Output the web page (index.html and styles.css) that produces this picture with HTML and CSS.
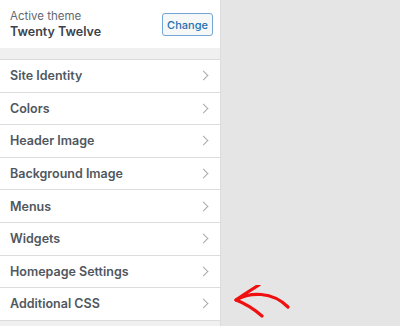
FILE: index.html
```html
<!DOCTYPE html>
<html lang="en">
<head>
    <meta charset="UTF-8">
    <title>Customize</title>
    <link rel="stylesheet" href="styles.css">
</head>
<body>

<div class="panel">
    <!-- Active theme -->
    <div class="theme">
        <div class="theme-info">
            <span class="theme-label">Active theme</span>
            <span class="theme-name">Twenty Twelve</span>
        </div>
        <button class="change-button">Change</button>
    </div>

    <div class="spacer"></div>

    <ul class="sections">
        <li>Site Identity<span class="chevron"></span></li>
        <li>Colors<span class="chevron"></span></li>
        <li>Header Image<span class="chevron"></span></li>
        <li>Background Image<span class="chevron"></span></li>
        <li>Menus<span class="chevron"></span></li>
        <li>Widgets<span class="chevron"></span></li>
        <li>Homepage Settings<span class="chevron"></span></li>
        <li class="marked">Additional CSS<span class="chevron"></span>
            <!-- Hand drawn arrow -->
            <svg class="arrow" width="64" height="40" viewBox="0 0 64 40">
                <path d="M4 15 C 18 7, 40 6, 56 22" />
                <path d="M27 0 C 19 5, 11 10, 4 15 C 12 18, 22 24, 30 31" />
            </svg>
        </li>
    </ul>
</div>

</body>
</html>
```

FILE: styles.css
```css
body {
    margin: 0;
    background-color: #e5e5e5;
    font-family: "Inter", "Liberation Sans", sans-serif;
    color: #50575e;
}

.panel {
    width: 220px;
    height: 326px;
    background-color: #f0f0f1;
    border-right: 1px solid #dcdcde;
}

/* Active theme block */
.theme {
    display: flex;
    align-items: center;
    justify-content: space-between;
    height: 48px;
    padding: 0 7px 0 10px;
    background-color: #fff;
    box-sizing: border-box;
}
.theme-info {
    display: flex;
    flex-direction: column;
    gap: 1px;
    margin-top: -1px;
}
.theme-label {
    font-size: 11.5px;
    color: #646970;
}
.theme-name {
    font-size: 12.5px;
    font-weight: 600;
    color: #3c434a;
}
.change-button {
    width: 51px;
    height: 23px;
    margin-top: 1px;
    padding: 0;
    border: 1px solid #72a6d9;
    border-radius: 3px;
    background-color: #f6f7f7;
    color: #2271b1;
    font-family: inherit;
    font-size: 11px;
    font-weight: 500;
}

.spacer {
    height: 11px;
}

/* Section list */
.sections {
    list-style: none;
    margin: 0;
    padding: 0;
    border-top: 1px solid #dcdcde;
}
.sections li {
    position: relative;
    display: flex;
    align-items: center;
    justify-content: space-between;
    height: 31.6px;
    padding: 0 13px 0 10px;
    background-color: #fff;
    border-bottom: 1px solid #dcdcde;
    font-size: 12.5px;
    font-weight: 600;
}
.chevron {
    width: 6px;
    height: 6px;
    border-top: 1.5px solid #a7aaad;
    border-right: 1.5px solid #a7aaad;
    transform: rotate(45deg);
}

.arrow {
    position: absolute;
    left: 232px;
    top: -3px;
    fill: none;
    stroke: #f01010;
    stroke-width: 3.2;
    stroke-linecap: round;
    stroke-linejoin: round;
}
```
